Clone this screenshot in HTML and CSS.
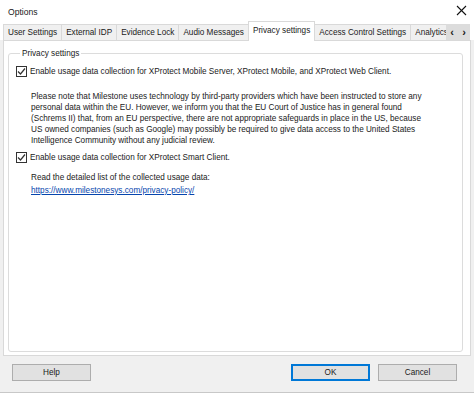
FILE: index.html
```html
<!DOCTYPE html>
<html lang="en">

<head>
  <meta charset="UTF-8">
  <title>Options</title>
  <link rel="stylesheet" href="styles.css">
</head>

<body>
  <div class="titlebar">
    <span class="title">Options</span>
    <span class="close">
      <svg width="11" height="11" viewBox="0 0 11 11">
        <line x1="1" y1="1" x2="10" y2="10" stroke="#111" stroke-width="1.1" />
        <line x1="10" y1="1" x2="1" y2="10" stroke="#111" stroke-width="1.1" />
      </svg>
    </span>
  </div>

  <div class="tabs">
    <div class="tab">User Settings</div>
    <div class="tab">External IDP</div>
    <div class="tab">Evidence Lock</div>
    <div class="tab">Audio Messages</div>
    <div class="tab active">Privacy settings</div>
    <div class="tab">Access Control Settings</div>
    <div class="tab last">Analytics</div>
    <div class="scroller">
      <span>&#8249;</span>
      <span>&#8250;</span>
    </div>
  </div>

  <div class="panel">
    <fieldset class="group">
      <legend>Privacy settings</legend>

      <label class="check">
        <span class="box"><svg width="9" height="9" viewBox="0 0 9 9"><path d="M1 4.5 L3.5 7 L8 1.5" stroke="#333" stroke-width="1.2" fill="none" /></svg></span>
        Enable usage data collection for XProtect Mobile Server, XProtect Mobile, and XProtect Web Client.
      </label>

      <p class="note">
        Please note that Milestone uses technology by third-party providers which have been instructed to store any<br>
        personal data within the EU. However, we inform you that the EU Court of Justice has in general found<br>
        (Schrems II) that, from an EU perspective, there are not appropriate safeguards in place in the US, because<br>
        US owned companies (such as Google) may possibly be required to give data access to the United States<br>
        Intelligence Community without any judicial review.
      </p>

      <label class="check second">
        <span class="box"><svg width="9" height="9" viewBox="0 0 9 9"><path d="M1 4.5 L3.5 7 L8 1.5" stroke="#333" stroke-width="1.2" fill="none" /></svg></span>
        Enable usage data collection for XProtect Smart Client.
      </label>

      <p class="read">Read the detailed list of the collected usage data:</p>
      <a class="link" href="#">https://www.milestonesys.com/privacy-policy/</a>
    </fieldset>
  </div>

  <div class="buttons">
    <button class="btn">Help</button>
    <div class="spacer"></div>
    <button class="btn default">OK</button>
    <button class="btn">Cancel</button>
  </div>
</body>

</html>
```

FILE: styles.css
```css
* {
  margin: 0;
  padding: 0;
  box-sizing: border-box;
  font-family: 'Liberation Sans', Arial, sans-serif;
}

body {
  width: 474px;
  height: 393px;
  background: #f0f0f0;
  color: #1a1a1a;
  font-size: 8.2px;
  display: flex;
  flex-direction: column;
  border-bottom: 1px solid #c8c8c8;
}

.titlebar {
  height: 22px;
  flex-shrink: 0;
  background: #fff;
  display: flex;
  align-items: center;
  padding: 2px 7px 0 8px;
  font-size: 8.6px;
}

.close {
  margin-left: auto;
  margin-top: -3px;
  width: 11px;
  height: 11px;
  display: block;
}

.close svg {
  display: block;
}

.tabs {
  display: flex;
  align-items: flex-end;
  height: 18px;
  flex-shrink: 0;
  padding-left: 3px;
  background: #fff;
  position: relative;
  z-index: 1;
}

.tab {
  height: 16px;
  line-height: 15px;
  padding: 0 4px;
  background: #f0f0f0;
  border: 1px solid #d9d9d9;
  border-right: none;
  border-bottom: none;
  white-space: nowrap;
}

.tab.active {
  height: 20px;
  line-height: 17px;
  background: #fff;
  margin-bottom: -1px;
  border-right: 1px solid #d9d9d9;
}

.tab.active + .tab {
  border-left: none;
}

.tab.last {
  width: 36px;
  overflow: hidden;
  padding-right: 0;
}

.scroller {
  height: 16px;
  width: 24px;
  display: flex;
  align-items: center;
  justify-content: space-around;
  background: #dcdcdc;
  font-size: 11px;
  font-weight: bold;
  line-height: 14px;
}

.panel {
  margin: 0 3px;
  height: 316px;
  flex-shrink: 0;
  background: #fff;
  border: 1px solid #d9d9d9;
  padding: 7px 7px 3px 4px;
  display: flex;
}

.group {
  flex: 1;
  border: 1px solid #dcdcdc;
  border-radius: 3px;
  padding: 6px 7px 0 7px;
}

.group legend {
  margin-left: 4px;
  padding: 0 2px;
  line-height: 11px;
}

.check {
  display: flex;
  align-items: center;
  gap: 3px;
  height: 13px;
}

.box {
  width: 11px;
  height: 11px;
  border: 1px solid #333;
  display: flex;
  align-items: center;
  justify-content: center;
  background: #fff;
}

.note {
  margin: 13px 0 0 15px;
  line-height: 11px;
}

.check.second {
  margin-top: 5px;
}

.read {
  margin: 7px 0 0 15px;
  line-height: 13px;
}

.link {
  display: block;
  margin-left: 15px;
  line-height: 13px;
  color: #0645ad;
}

.buttons {
  display: flex;
  align-items: center;
  padding: 8px 17px 0 12px;
  gap: 8px;
}

.spacer {
  flex: 1;
}

.btn {
  width: 79px;
  height: 17px;
  background: #e1e1e1;
  border: 1px solid #adadad;
  font-size: 8.2px;
  color: #1a1a1a;
}

.btn.default {
  border: 1px solid #0078d7;
  box-shadow: inset 0 0 0 1px #0078d7;
  border-width: 1px;
}
```
